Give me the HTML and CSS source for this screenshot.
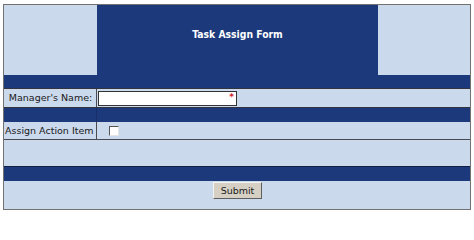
FILE: index.html
```html
<!DOCTYPE html>
<html>
<head>
<meta charset="utf-8">
<link rel="stylesheet" href="styles.css">
</head>
<body>
<form class="frame">
  <div class="header">
    <div class="hbox"></div>
    <div class="title">Task Assign Form</div>
    <div class="hbox"></div>
  </div>
  <div class="row row-name">
    <div class="label center">Manager's Name:</div>
    <div class="field">
      <span class="input-wrap"><input class="text" type="text"><span class="req">*</span></span>
    </div>
  </div>
  <div class="band band-split"><div class="band-left"></div><div></div></div>
  <div class="row row-assign">
    <div class="label">Assign Action Item</div>
    <div class="field"><input class="check" type="checkbox"></div>
  </div>
  <div class="empty"></div>
  <div class="band band-bottom"></div>
  <div class="actions"><button class="submit" type="button">Submit</button></div>
</form>
</body>
</html>
```

FILE: styles.css
```css
html, body {
  margin: 0;
  padding: 0;
  background: #ffffff;
}
body {
  font-family: "DejaVu Sans", Verdana, sans-serif;
  font-size: 9.5px;
  color: #1a1a1a;
}
.frame {
  margin: 4px 0 0 3px;
  width: 466px;
  border: 1px solid #727272;
  background: #cbd9ec;
}
.header {
  display: grid;
  grid-template-columns: 93px 1fr 92px;
  height: 83px;
  background: #1c3a7b;
  border-bottom: 1px solid #34343e;
}
.hbox {
  height: 70px;
  background: #cbd9ec;
}
.title {
  color: #ffffff;
  font-family: "DejaVu Sans Condensed", "DejaVu Sans", sans-serif;
  font-stretch: condensed;
  font-size: 10.3px;
  font-weight: bold;
  text-align: center;
  padding-top: 23px;
  line-height: 12px;
}
.row {
  display: grid;
  grid-template-columns: 93px 1fr;
}
.row-name {
  height: 18px;
  border-bottom: 1px solid #34343e;
}
.row-assign {
  height: 17px;
  border-bottom: 1px solid #4a4a52;
}
.label {
  border-right: 1px solid #4a4a52;
  line-height: 17px;
  padding-left: 1px;
  white-space: nowrap;
}
.label.center {
  text-align: center;
  line-height: 18px;
}
.field {
  display: flex;
  align-items: center;
  padding-left: 1px;
}
.row-assign .field {
  padding-left: 12px;
}
.input-wrap {
  position: relative;
  display: block;
  height: 15px;
  margin-top: 1px;
}
.text {
  box-sizing: border-box;
  display: block;
  width: 139px;
  height: 15px;
  margin: 0;
  padding: 0 2px;
  border: 1px solid #333333;
  background: #ffffff;
  font-family: inherit;
  font-size: 10px;
}
.req {
  position: absolute;
  right: 3px;
  top: 1px;
  color: #d0242c;
  font-size: 9px;
  line-height: 10px;
  font-weight: bold;
}
.band {
  height: 14px;
  background: #1c3a7b;
}
.band-split {
  display: grid;
  grid-template-columns: 93px 1fr;
}
.band-left {
  border-right: 1px solid #18306a;
}
.check {
  appearance: none;
  -webkit-appearance: none;
  box-sizing: border-box;
  width: 10px;
  height: 10px;
  margin: 0;
  background: #ffffff;
  border-top: 1px solid #555555;
  border-left: 1px solid #555555;
  border-right: 1px solid #e6e6e6;
  border-bottom: 1px solid #e6e6e6;
}
.empty {
  height: 26px;
}
.band-bottom {
  height: 14px;
  border-top: 1px solid #121f44;
}
.actions {
  height: 28px;
  display: flex;
  justify-content: center;
  align-items: flex-start;
  padding-top: 1px;
  box-sizing: border-box;
}
.submit {
  width: 49px;
  height: 17px;
  margin: 0 0 0 1px;
  padding: 0;
  background: #d6d0c4;
  border-top: 1px solid #f4f2ee;
  border-left: 1px solid #f4f2ee;
  border-right: 1px solid #5e5e5e;
  border-bottom: 1px solid #5e5e5e;
  font-family: inherit;
  font-size: 9.5px;
  color: #1a1a1a;
  line-height: 15px;
}
```
